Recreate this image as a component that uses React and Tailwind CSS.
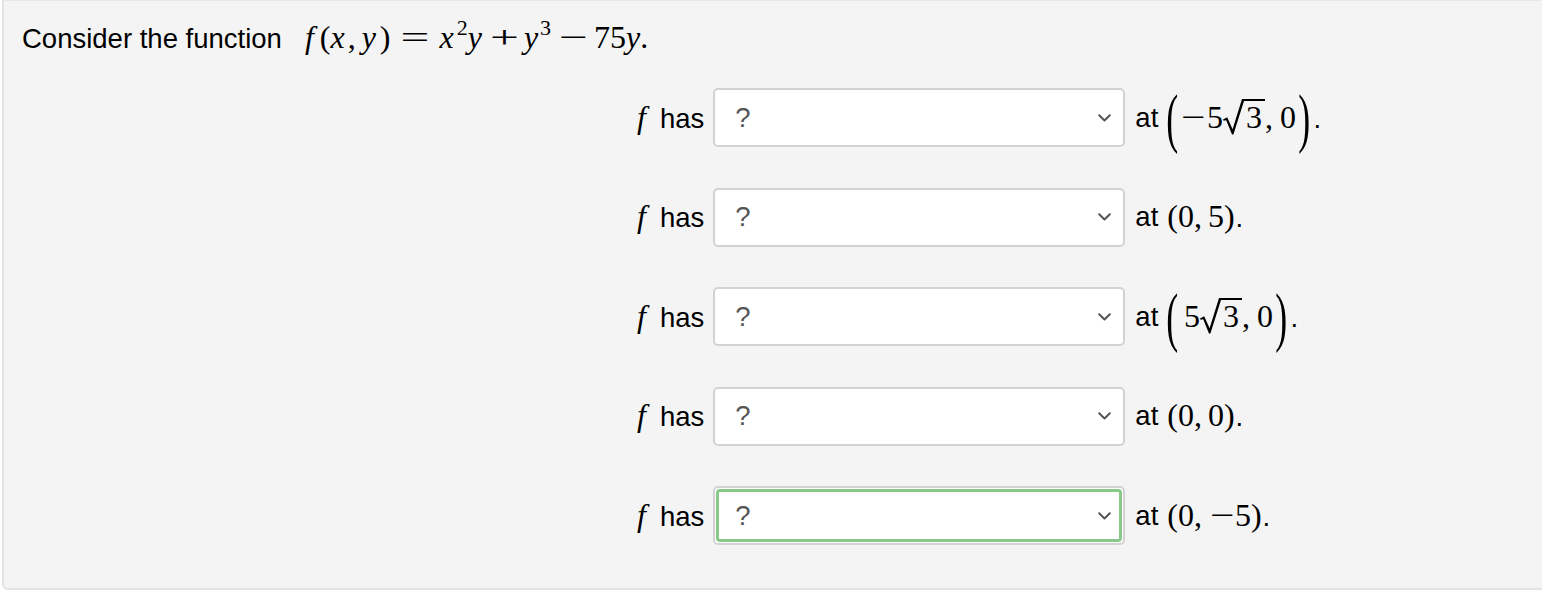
import React from 'react';

const serif = 'font-["Liberation_Serif",serif]';

function M({ children, className = '' }) {
  return <span className={`${serif} text-[32px] ${className}`}>{children}</span>;
}

function V({ children, className = '' }) {
  return <i className={`italic ${className}`}>{children}</i>;
}

function Sup({ children, className = '' }) {
  return <sup className={`text-[22px] -top-[13px] ${className}`}>{children}</sup>;
}

// wide operator, like the TeX glyphs
function Op({ children, className = '' }) {
  return <span className={`inline-block text-center scale-x-[1.6] ${className}`}>{children}</span>;
}

function Minus({ className = '' }) {
  return <span className={`inline-block w-[24px] text-center scale-x-[1.35] ${className}`}>−</span>;
}

function Sqrt3() {
  return (
    <span className="relative inline-block pl-[20px] leading-[32px]">
      <svg className="absolute left-0 top-0" width="21" height="36" viewBox="0 0 21 36">
        <path d="M0 20.6 L4.2 18.2 L9.6 30.2 L19 0 L21 0 L21 2 L10.4 35.6 L9 35.6 L3.2 21.2 L0.6 21.8 Z" fill="#000" />
      </svg>
      <span className="inline-block border-t-2 border-black leading-[32px] px-[3px]">3</span>
    </span>
  );
}

function BigParen({ children, className = '' }) {
  return <span className={`inline-block scale-y-[2.05] scale-x-[1.12] ${className}`}>{children}</span>;
}

function Dot({ className = 'ml-[1px]' }) {
  return <span className={`font-['Liberation_Sans',sans-serif] text-[27.5px] ${className}`}>.</span>;
}

const rows = [
  {
    key: 'a',
    point: (
      <M>
        <BigParen>(</BigParen>
        <Minus className="ml-[3px]" />
        <span className="ml-[2px]">5</span>
        <Sqrt3 />
        <span>,</span>
        <span className="ml-[7px]">0</span>
        <BigParen className="ml-[3px]">)</BigParen>
        <Dot className="ml-[4px]" />
      </M>
    ),
  },
  {
    key: 'b',
    point: (
      <M>
        (0,<span className="ml-[6px]">5</span>)<Dot />
      </M>
    ),
  },
  {
    key: 'c',
    point: (
      <M>
        <BigParen>(</BigParen>
        <span className="ml-[6px]">5</span>
        <Sqrt3 />
        <span>,</span>
        <span className="ml-[7px]">0</span>
        <BigParen className="ml-[3px]">)</BigParen>
        <Dot className="ml-[4px]" />
      </M>
    ),
  },
  {
    key: 'd',
    point: (
      <M>
        (0,<span className="ml-[6px]">0</span>)<Dot />
      </M>
    ),
  },
  {
    key: 'e',
    point: (
      <M>
        (0,
        <Minus className="ml-[8px]" />
        <span className="ml-[1px]">5</span>)<Dot />
      </M>
    ),
    focused: true,
  },
];

function Chevron() {
  return (
    <svg width="13" height="8" viewBox="0 0 13 8" fill="none">
      <path d="M1.2 1.2 L6.5 6.5 L11.8 1.2" stroke="#555" strokeWidth="2" strokeLinecap="round" strokeLinejoin="round" />
    </svg>
  );
}

function Select({ focused }) {
  return (
    <div className="w-[412px] h-[59px] shrink-0 rounded-[5px] border-2 border-[#d2d2d2] bg-white p-[1px]">
      <div
        className={`h-full flex items-center justify-between pl-[16px] pr-[8px] rounded-[4px] border-[3px] ${
          focused ? 'border-[#88c888]' : 'border-transparent'
        }`}
      >
        <span className="text-[#555] text-[27.5px]">?</span>
        <Chevron />
      </div>
    </div>
  );
}

export default function App() {
  return (
    <div className="w-[1542px] h-[592px] overflow-hidden bg-white font-['Liberation_Sans',sans-serif] text-black">
      <div className="ml-[2px] w-[1560px] h-[590px] bg-[#f4f4f4] border-l-2 border-b-2 border-[#e4e4e4] border-t border-t-[#e8e8e8] rounded-bl-[6px]">
        <p className="pt-[18px] pl-[18px] h-[55px] text-[27.5px] leading-[36px] whitespace-nowrap">
          Consider the function
          <M className="ml-[23px]">
            <V className="mr-[6px]">f</V>(<V className="mr-[3px]">x</V>,<V className="ml-[6px] mr-[4px]">y</V>)
            <Op className="ml-[10px] mr-[11px] w-[28px]">=</Op>
            <V>x</V>
            <Sup className="ml-[3px]">2</Sup>
            <V>y</V>
            <Op className="ml-[10px] mr-[7px] w-[25px]">+</Op>
            <V>y</V>
            <Sup className="ml-[2px]">3</Sup>
            <Op className="ml-[10px] mr-[9px] w-[24px]">−</Op>
            75<V>y</V>.
          </M>
        </p>

        <div className="mt-[32px] pl-[633px] flex flex-col gap-[40.5px] leading-[36px]">
          {rows.map((row) => (
            <div key={row.key} className="flex items-center h-[59px] whitespace-nowrap">
              <span className="mr-[9px] text-[27.5px]">
                <M className="inline-block w-[23px]">
                  <V>f</V>
                </M>
                has
              </span>
              <Select focused={row.focused} />
              <span className="ml-[10px] text-[27.5px] mr-[9px]">at</span>
              {row.point}
            </div>
          ))}
        </div>
      </div>
    </div>
  );
}
